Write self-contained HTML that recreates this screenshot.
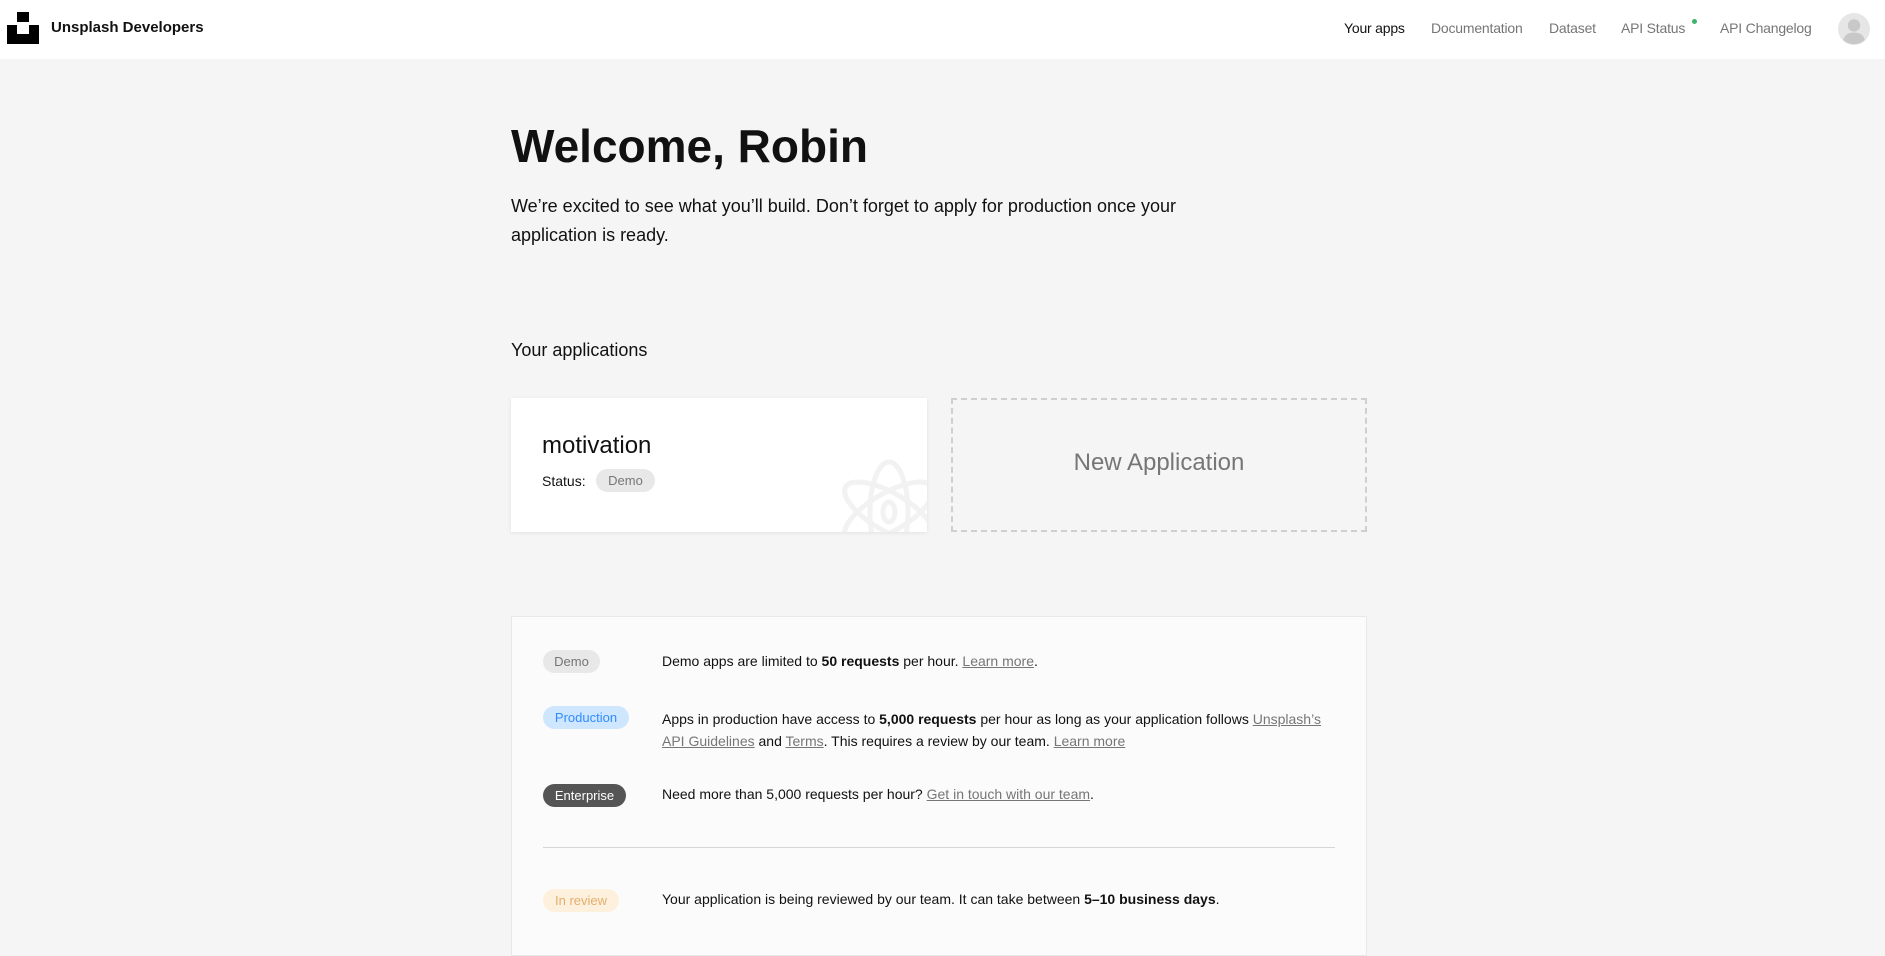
<!DOCTYPE html>
<html><head><meta charset="utf-8">
<style>
*{margin:0;padding:0;box-sizing:border-box}
body{width:1885px;height:926px;overflow:hidden;background:#f5f5f5;font-family:"Liberation Sans",Arial,sans-serif;color:#111;position:relative}
.hdr{position:absolute;left:0;top:0;width:1885px;height:59px;background:#fff}
.abs{position:absolute;white-space:nowrap}
.nav{font-size:14px;color:#767676;top:20px;letter-spacing:-0.2px}
.pill{position:absolute;border-radius:12px;font-size:13px;text-align:center;line-height:23px;height:23px}
.t{position:absolute;left:662px;font-size:14px;color:#111;white-space:nowrap}
.t a{color:#767676;text-decoration:underline}
</style></head><body>
<div class="hdr"></div>
<svg class="abs" style="left:7px;top:12px" width="32" height="32" viewBox="0 0 32 32"><rect x="10" y="0" width="12" height="10" fill="#000"/><path d="M0 13H10V22H22V13H32V32H0Z" fill="#000"/></svg>
<div class="abs" style="left:51px;top:19px;font-size:15px;font-weight:bold;color:#111">Unsplash Developers</div>
<div class="abs nav" style="left:1344px;color:#111">Your apps</div>
<div class="abs nav" style="left:1431px">Documentation</div>
<div class="abs nav" style="left:1549px">Dataset</div>
<div class="abs nav" style="left:1621px">API Status</div>
<div class="abs" style="left:1692px;top:19px;width:5px;height:5px;border-radius:50%;background:#3cb46e"></div>
<div class="abs nav" style="left:1720px">API Changelog</div>
<svg class="abs" style="left:1838px;top:13px" width="32" height="32" viewBox="0 0 31 31"><circle cx="15.5" cy="15.5" r="15.5" fill="#e6e6e6"/><circle cx="15.5" cy="12" r="6" fill="#c8c8c8"/><path d="M5 26C7 20 11 19 15.5 19S24 20 26 26A15 15 0 0 1 5 26Z" fill="#c8c8c8"/></svg>

<div class="abs" style="left:511px;top:119px;font-size:46px;font-weight:bold;color:#111">Welcome, Robin</div>
<div class="abs" style="left:511px;top:192px;font-size:18px;line-height:29px;color:#111;white-space:normal;width:700px">We’re excited to see what you’ll build. Don’t forget to apply for production once your application is ready.</div>
<div class="abs" style="left:511px;top:340px;font-size:18px;color:#111">Your applications</div>

<div class="abs" style="left:511px;top:398px;width:416px;height:134px;background:#fff;box-shadow:0 1px 4px rgba(0,0,0,.08);overflow:hidden">
 <div class="abs" style="left:31px;top:34px;font-size:24px;color:#111">motivation</div>
 <div class="abs" style="left:31px;top:75px;font-size:14px;color:#111">Status:</div>
 <div class="pill" style="left:85px;top:71px;width:59px;background:#e8e8e8;color:#767676">Demo</div>
 <svg class="abs" style="left:318px;top:54px" width="120" height="120" viewBox="0 0 120 120" fill="none" stroke="#f2f2f2" stroke-width="5"><ellipse cx="60" cy="60" rx="50" ry="19" transform="rotate(90 60 60)"/><ellipse cx="60" cy="60" rx="50" ry="19" transform="rotate(30 60 60)"/><ellipse cx="60" cy="60" rx="50" ry="19" transform="rotate(-30 60 60)"/><ellipse cx="60" cy="60" rx="6" ry="10"/></svg>
</div>
<div class="abs" style="left:951px;top:398px;width:416px;height:134px;border:2px dashed #cfcfcf"></div>
<div class="abs" style="left:951px;top:449px;width:416px;text-align:center;font-size:24px;color:#767676">New Application</div>

<div class="abs" style="left:511px;top:616px;width:856px;height:340px;background:#fbfbfb;border:1px solid #e8e8e8"></div>
<div class="pill" style="left:543px;top:650px;width:57px;background:#e8e8e8;color:#767676">Demo</div>
<div class="t" style="top:653px">Demo apps are limited to <b>50 requests</b> per hour. <a>Learn more</a>.</div>
<div class="pill" style="left:543px;top:706px;width:86px;background:#cfe6ff;color:#2f8cff">Production</div>
<div class="t" style="top:708px;line-height:22px">Apps in production have access to <b>5,000 requests</b> per hour as long as your application follows <a>Unsplash’s</a><br><a>API Guidelines</a> and <a>Terms</a>. This requires a review by our team. <a>Learn more</a></div>
<div class="pill" style="left:543px;top:784px;width:83px;background:#555;color:#fff">Enterprise</div>
<div class="t" style="top:786px">Need more than 5,000 requests per hour? <a>Get in touch with our team</a>.</div>
<div class="abs" style="left:543px;top:847px;width:792px;height:1px;background:#d6d6d6"></div>
<div class="pill" style="left:543px;top:889px;width:76px;background:#fdf0dc;color:#e3ae70">In review</div>
<div class="t" style="top:891px">Your application is being reviewed by our team. It can take between <b>5–10 business days</b>.</div>
</body></html>
